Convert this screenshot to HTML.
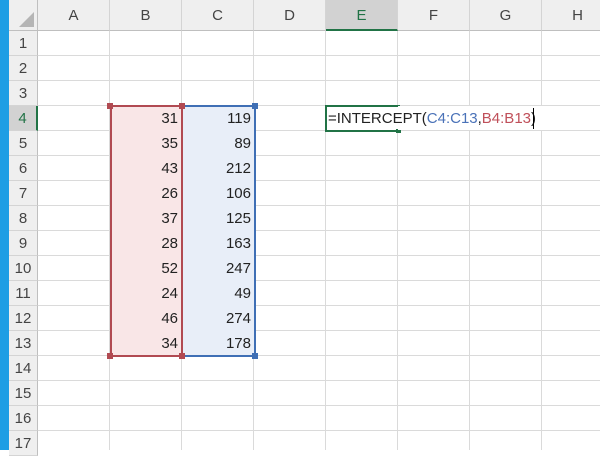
<!DOCTYPE html>
<html><head><meta charset="utf-8"><style>
body{margin:0;width:600px;height:450px;overflow:hidden;background:#fff;font-family:"Liberation Sans","Noto Sans CJK JP",sans-serif;position:relative}
div{position:absolute;box-sizing:border-box}
.h{background:#efefef;color:#444;font-size:15px;text-align:center;line-height:31px;top:0;height:31px;border-right:1px solid #d4d4d4;border-bottom:1px solid #bfbfbf}
.r{background:#efefef;color:#444;font-size:15px;text-align:center;left:9px;width:29px;height:25px;line-height:25px;border-bottom:1px solid #d4d4d4;border-right:1px solid #bfbfbf}
.gv{top:31px;height:419px;width:1px;background:#dadada}
.gh{left:38px;width:562px;height:1px;background:#dadada}
.n{font-size:15px;color:#222;text-align:right;height:25px;line-height:25px}
.hd{width:6px;height:6px}
</style></head><body>
<div style="left:0;top:0;width:9px;height:450px;background:#1e9ee4"></div>
<div style="left:9px;top:0;width:29px;height:31px;background:#efefef;border-right:1px solid #bfbfbf;border-bottom:1px solid #bfbfbf"></div>
<svg style="position:absolute;left:18px;top:12px" width="18" height="16"><polygon points="16,0 16,15 1,15" fill="#b5b5b5"/></svg>
<div class="h" style="left:38px;width:72px">A</div>
<div class="h" style="left:110px;width:72px">B</div>
<div class="h" style="left:182px;width:72px">C</div>
<div class="h" style="left:254px;width:72px">D</div>
<div class="h" style="left:326px;width:72px;background:#d2d2d2;border-bottom:2px solid #217346;color:#217346">E</div>
<div class="h" style="left:398px;width:72px">F</div>
<div class="h" style="left:470px;width:72px">G</div>
<div class="h" style="left:542px;width:72px">H</div>
<div class="gv" style="left:109px"></div><div class="gv" style="left:181px"></div><div class="gv" style="left:253px"></div><div class="gv" style="left:325px"></div><div class="gv" style="left:397px"></div><div class="gv" style="left:469px"></div><div class="gv" style="left:541px"></div>
<div class="r" style="top:31px">1</div><div class="gh" style="top:55px"></div>
<div class="r" style="top:56px">2</div><div class="gh" style="top:80px"></div>
<div class="r" style="top:81px">3</div><div class="gh" style="top:105px"></div>
<div class="r" style="top:106px;background:#d2d2d2;color:#217346;border-right:2px solid #217346">4</div><div class="gh" style="top:130px"></div>
<div class="r" style="top:131px">5</div><div class="gh" style="top:155px"></div>
<div class="r" style="top:156px">6</div><div class="gh" style="top:180px"></div>
<div class="r" style="top:181px">7</div><div class="gh" style="top:205px"></div>
<div class="r" style="top:206px">8</div><div class="gh" style="top:230px"></div>
<div class="r" style="top:231px">9</div><div class="gh" style="top:255px"></div>
<div class="r" style="top:256px">10</div><div class="gh" style="top:280px"></div>
<div class="r" style="top:281px">11</div><div class="gh" style="top:305px"></div>
<div class="r" style="top:306px">12</div><div class="gh" style="top:330px"></div>
<div class="r" style="top:331px">13</div><div class="gh" style="top:355px"></div>
<div class="r" style="top:356px">14</div><div class="gh" style="top:380px"></div>
<div class="r" style="top:381px">15</div><div class="gh" style="top:405px"></div>
<div class="r" style="top:406px">16</div><div class="gh" style="top:430px"></div>
<div class="r" style="top:431px">17</div>
<!-- ranges -->
<div style="left:110px;top:105px;width:73px;height:252px;background:#f9e6e7;border:2px solid #b14a52"></div>
<div style="left:183px;top:105px;width:73px;height:252px;background:#e8eef8;border:2px solid #3f6fb5;border-left:none"></div>
<div style="left:110px;top:105px;width:73px;height:252px;border:2px solid #b14a52;background:transparent"></div>
<div class="hd" style="left:107px;top:103px;background:#b14a52"></div>
<div class="hd" style="left:179px;top:103px;background:#b14a52"></div>
<div class="hd" style="left:107px;top:353px;background:#b14a52"></div>
<div class="hd" style="left:179px;top:353px;background:#b14a52"></div>
<div class="hd" style="left:252px;top:103px;background:#3f6fb5"></div>
<div class="hd" style="left:252px;top:353px;background:#3f6fb5"></div>
<div style="left:110px;top:106px;width:68px">
<div class="n" style="position:relative">31</div><div class="n" style="position:relative">35</div><div class="n" style="position:relative">43</div><div class="n" style="position:relative">26</div><div class="n" style="position:relative">37</div><div class="n" style="position:relative">28</div><div class="n" style="position:relative">52</div><div class="n" style="position:relative">24</div><div class="n" style="position:relative">46</div><div class="n" style="position:relative">34</div></div>
<div style="left:182px;top:106px;width:69px">
<div class="n" style="position:relative">119</div><div class="n" style="position:relative">89</div><div class="n" style="position:relative">212</div><div class="n" style="position:relative">106</div><div class="n" style="position:relative">125</div><div class="n" style="position:relative">163</div><div class="n" style="position:relative">247</div><div class="n" style="position:relative">49</div><div class="n" style="position:relative">274</div><div class="n" style="position:relative">178</div></div>
<!-- active cell -->
<div style="left:325px;top:105px;width:75px;height:27px;border:2px solid #217346;border-right:none;background:#fff"></div>
<div style="left:396px;top:129px;width:5px;height:4px;background:#217346"></div>
<div style="left:398px;top:106px;width:145px;height:24px;background:#fff"></div>
<div style="left:328px;top:106px;height:25px;line-height:25px;font-size:15px;color:#222;white-space:nowrap;background:transparent">=INTERCEPT(<span style="color:#4a72b8">C4:C13</span>,<span style="color:#c0505a">B4:B13</span>)</div>
<div style="left:533px;top:108px;width:1px;height:21px;background:#000"></div>
</body></html>
